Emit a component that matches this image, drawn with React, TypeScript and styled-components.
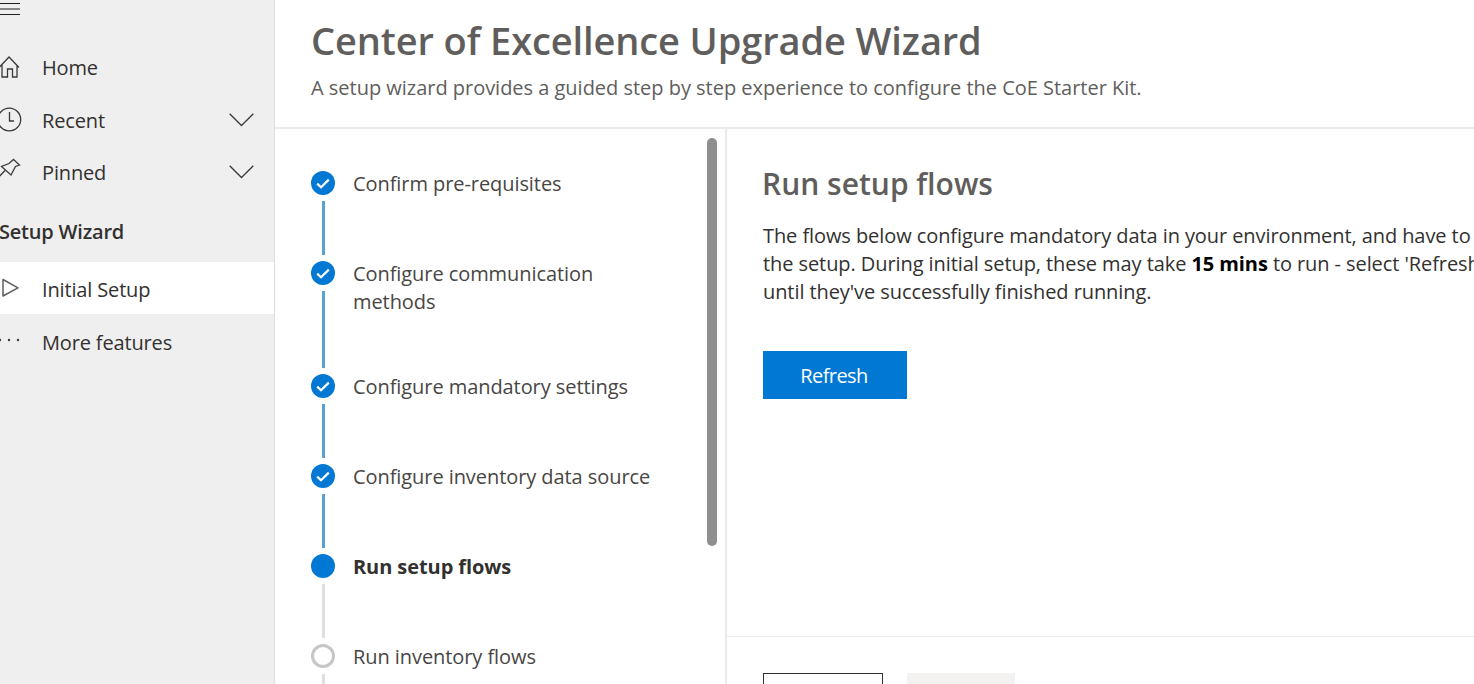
import React from "react";
import styled, { createGlobalStyle } from "styled-components";

const Global = createGlobalStyle`
  html, body { margin: 0; padding: 0; height: 100%; background: #fff; overflow: hidden; }
  #root { height: 100%; }
  * { box-sizing: border-box; }
`;

const Page = styled.div`
  display: flex;
  width: 1474px;
  height: 684px;
  overflow: hidden;
  font-family: "Open Sans", "Noto Sans", sans-serif;
  color: #323130;
`;

const Sidebar = styled.nav`
  flex: 0 0 275px;
  height: 100%;
  background: #efefef;
  border-right: 1px solid #dcdcdc;
  display: flex;
  flex-direction: column;
  overflow: hidden;
`;

const Burger = styled.div`
  height: 41px;
  padding-top: 3px;
`;

const NavRow = styled.div<{ $active?: boolean }>`
  height: 52.5px;
  display: flex;
  align-items: center;
  background: ${(p) => (p.$active ? "#fff" : "transparent")};
  flex: none;
`;

const IconSlot = styled.span`
  flex: 0 0 42px;
  width: 42px;
  height: 30px;
  display: block;
  overflow: visible;
`;

const NavLabel = styled.span<{ $drop?: number }>`
  font-size: 20px;
  letter-spacing: -0.15px;
  flex: 1;
  color: #323130;
  padding-top: ${(p) => p.$drop ?? 0}px;
`;

const Chevron = styled.span`
  flex: 0 0 45px;
  height: 14px;
  display: block;
`;

const SectionTitle = styled.div`
  height: 63px;
  flex: none;
  font-size: 20px;
  font-weight: 600;
  letter-spacing: -0.2px;
  line-height: 66px;
  margin-left: -1px;
  color: #323130;
`;

const Main = styled.main`
  flex: 1;
  min-width: 0;
  display: flex;
  flex-direction: column;
`;

const Header = styled.header`
  height: 129px;
  flex: none;
  padding: 13px 0 0 36px;
  border-bottom: 2px solid #eaeaea;
`;

const Title = styled.h1`
  margin: 0;
  font-size: 38px;
  line-height: 54px;
  font-weight: 600;
  letter-spacing: -0.11px;
  color: #605e5c;
  white-space: nowrap;
`;

const Subtitle = styled.p`
  margin: 4px 0 0;
  font-size: 20px;
  line-height: 34px;
  letter-spacing: -0.02px;
  color: #605e5c;
  white-space: nowrap;
`;

const Body = styled.div`
  flex: 1;
  min-height: 0;
  display: flex;
`;

const StepsPane = styled.section`
  position: relative;
  flex: 0 0 452px;
  border-right: 2px solid #eaeaea;
  padding: 42px 0 0 36px;
  overflow: hidden;
`;

const Thumb = styled.div`
  position: absolute;
  left: 432px;
  top: 9px;
  width: 10px;
  height: 408px;
  border-radius: 5px;
  background: #8f8f8f;
`;

const Step = styled.div`
  display: flex;
  min-height: 90px;
`;

const Rail = styled.div`
  flex: 0 0 24px;
  display: flex;
  flex-direction: column;
  align-items: center;
  margin-right: 18px;
`;

const Dot = styled.span<{ $state: "done" | "current" | "todo" }>`
  flex: 0 0 24px;
  width: 24px;
  height: 24px;
  border-radius: 50%;
  display: flex;
  align-items: center;
  justify-content: center;
  background: ${(p) => (p.$state === "todo" ? "#fff" : "#0078d4")};
  border: ${(p) => (p.$state === "todo" ? "3px solid #c8c6c4" : "none")};
`;

const Connector = styled.span<{ $done: boolean }>`
  flex: 1;
  width: 3px;
  margin: 6px 0;
  background: ${(p) => (p.$done ? "#5ba0d3" : "#e1dfdd")};
`;

const StepLabel = styled.div<{ $current?: boolean }>`
  margin-top: -1px;
  padding-bottom: 58px;
  width: 300px;
  font-size: 20px;
  line-height: 28px;
  letter-spacing: ${(p) => (p.$current ? "-0.08px" : "-0.07px")};
  font-weight: ${(p) => (p.$current ? 700 : 400)};
  color: ${(p) => (p.$current ? "#323130" : "#484644")};
`;

const Content = styled.section`
  flex: 1;
  min-width: 0;
  display: flex;
  flex-direction: column;
  overflow: hidden;
`;

const ContentTop = styled.div`
  height: 508px;
  flex: none;
  padding: 33px 0 0 36px;
  border-bottom: 1px solid #eaeaea;
`;

const SectionHeading = styled.h2`
  margin: 0 0 0 -1px;
  font-size: 30px;
  line-height: 44px;
  font-weight: 600;
  color: #605e5c;
`;

const Para = styled.p`
  margin: 16px 0 0;
  font-size: 20px;
  line-height: 28px;
  letter-spacing: -0.08px;
  color: #323130;
  white-space: nowrap;
  strong { font-weight: 700; color: #000; }
`;

const Primary = styled.button`
  display: block;
  margin-top: 45px;
  width: 144px;
  height: 48px;
  padding: 0 2px 0 0;
  border: none;
  background: #0078d4;
  color: #fff;
  font: 20px "Open Sans", "Noto Sans", sans-serif;
  letter-spacing: -0.6px;
`;

const Footer = styled.div`
  flex: 1;
  display: flex;
  gap: 24px;
  padding: 36px 0 0 36px;
`;

const Outlined = styled.div`
  width: 120px;
  height: 60px;
  border: 1px solid #323130;
  background: #fff;
`;

const Disabled = styled.div`
  width: 108px;
  height: 60px;
  background: #f3f2f1;
`;

const stroke = { fill: "none", stroke: "#3b3a39", strokeWidth: 1.3 };

const Svg = ({ children }: { children: React.ReactNode }) => (
  <svg width="42" height="30" viewBox="0 0 42 30" style={{ display: "block", overflow: "visible" }}>
    {children}
  </svg>
);

const HomeIcon = () => (
  <Svg>
    <path {...stroke} d="M-1 15.5 L9 5 L19 15.5 M2 13 V25 H7.5 V17 H12.5 V25 H17 V13" />
  </Svg>
);
const ClockIcon = () => (
  <Svg>
    <circle {...stroke} cx="9.3" cy="14.5" r="11.4" />
    <path {...stroke} d="M9.5 7 V16 H14" />
  </Svg>
);
const PinIcon = () => (
  <Svg>
    <path {...stroke} d="M13.5 2.5 L19.5 8 L15.5 9.5 L11 18 L1.5 9.5 L9 6.5 Z M5 13.5 L-3 22" />
  </Svg>
);
const PlayIcon = () => (
  <Svg>
    <path d="M3 6.5 L18 14.8 L3 23 Z" fill="none" stroke="#5f5e5c" strokeWidth="1.5" strokeLinejoin="round" />
  </Svg>
);
const DotsIcon = () => (
  <Svg>
    <circle cx="0" cy="15" r="1.2" fill="#3b3a39" />
    <circle cx="9" cy="15" r="1.2" fill="#3b3a39" />
    <circle cx="18" cy="15" r="1.2" fill="#3b3a39" />
  </Svg>
);
const Caret = () => (
  <svg width="25" height="14" viewBox="0 0 25 14" style={{ display: "block" }}>
    <path d="M0.7 0.7 L12.5 12.5 L24.3 0.7" fill="none" stroke="#3b3a39" strokeWidth="1.3" />
  </svg>
);
const Hamburger = () => (
  <svg width="20" height="13" viewBox="0 0 20 13" style={{ display: "block" }}>
    <path d="M0 .5H20M0 6H20M0 11.5H20" stroke="#1f1f1f" strokeWidth="1" fill="none" />
  </svg>
);
const Check = () => (
  <svg width="14" height="11" viewBox="0 0 14 11" style={{ display: "block" }}>
    <path d="M1.2 5.6 L5 9.2 L12.8 1.6" fill="none" stroke="#fff" strokeWidth="2.2" />
  </svg>
);

const steps: { label: React.ReactNode; state: "done" | "current" | "todo" }[] = [
  { label: "Confirm pre-requisites", state: "done" },
  { label: <>Configure communication<br />methods</>, state: "done" },
  { label: "Configure mandatory settings", state: "done" },
  { label: "Configure inventory data source", state: "done" },
  { label: "Run setup flows", state: "current" },
  { label: "Run inventory flows", state: "todo" },
];

export default function App() {
  return (
    <Page>
      <Global />
      <Sidebar>
        <Burger><Hamburger /></Burger>
        <NavRow><IconSlot><HomeIcon /></IconSlot><NavLabel>Home</NavLabel></NavRow>
        <NavRow>
          <IconSlot><ClockIcon /></IconSlot><NavLabel $drop={2}>Recent</NavLabel>
          <Chevron><Caret /></Chevron>
        </NavRow>
        <NavRow>
          <IconSlot><PinIcon /></IconSlot><NavLabel>Pinned</NavLabel>
          <Chevron><Caret /></Chevron>
        </NavRow>
        <SectionTitle>Setup Wizard</SectionTitle>
        <NavRow $active><IconSlot><PlayIcon /></IconSlot><NavLabel $drop={4}>Initial Setup</NavLabel></NavRow>
        <NavRow><IconSlot><DotsIcon /></IconSlot><NavLabel $drop={4}>More features</NavLabel></NavRow>
      </Sidebar>
      <Main>
        <Header>
          <Title>Center of Excellence Upgrade Wizard</Title>
          <Subtitle>A setup wizard provides a guided step by step experience to configure the CoE Starter Kit.</Subtitle>
        </Header>
        <Body>
          <StepsPane>
            <Thumb />
            {steps.map((s, i) => (
              <Step key={i}>
                <Rail>
                  <Dot $state={s.state}>{s.state === "done" && <Check />}</Dot>
                  <Connector $done={s.state === "done"} />
                </Rail>
                <StepLabel $current={s.state === "current"}>{s.label}</StepLabel>
              </Step>
            ))}
          </StepsPane>
          <Content>
            <ContentTop>
              <SectionHeading>Run setup flows</SectionHeading>
              <Para>
                The flows below configure mandatory data in your environment, and have to complete before you continue<br />
                the setup. During initial setup, these may take <strong>15 mins</strong> to run - select 'Refresh' regularly<br />
                until they've successfully finished running.
              </Para>
              <Primary>Refresh</Primary>
            </ContentTop>
            <Footer>
              <Outlined />
              <Disabled />
            </Footer>
          </Content>
        </Body>
      </Main>
    </Page>
  );
}
